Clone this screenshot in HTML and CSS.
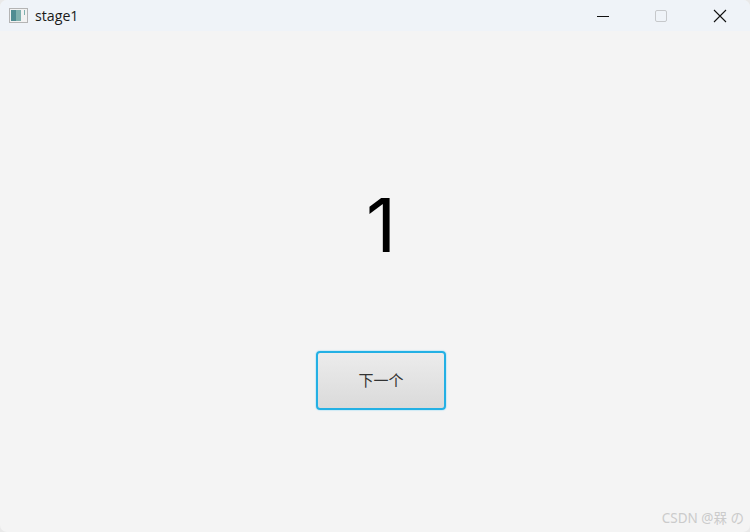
FILE: index.html
```html
<!DOCTYPE html>
<html lang="en">
<head>
    <meta charset="UTF-8">
    <meta name="viewport" content="width=device-width, initial-scale=1.0">
    <title>stage1</title>
    <link rel="stylesheet" href="styles.css">
</head>
<body>
    <div class="window">
        <div class="title-bar">
            <svg class="app-icon" width="19" height="15" viewBox="0 0 19 15">
                <rect x="0.5" y="0.5" width="18" height="14" fill="#f2f2f2" stroke="#b4b4b4"/>
                <rect x="2" y="2" width="10" height="11" fill="#7fb0ae"/>
                <rect x="2" y="2" width="5" height="11" fill="#4f8c92"/>
                <rect x="15" y="2" width="1" height="5" fill="#7fb0ae"/>
            </svg>
            <span class="title-text">stage1</span>
            <div class="window-controls">
                <button class="control">
                    <svg width="14" height="14" viewBox="0 0 14 14"><path d="M1 7.5H13" stroke="#111" stroke-width="1"/></svg>
                </button>
                <button class="control">
                    <svg width="14" height="14" viewBox="0 0 14 14"><rect x="1.5" y="1.5" width="11" height="11" rx="1.5" fill="none" stroke="#c6c8cb" stroke-width="1"/></svg>
                </button>
                <button class="control control-close">
                    <svg width="14" height="14" viewBox="0 0 14 14"><path d="M1 1L13 13M13 1L1 13" stroke="#111" stroke-width="1.1"/></svg>
                </button>
            </div>
        </div>
        <div class="content">
            <div class="counter">1</div>
            <button class="next-btn">下一个</button>
        </div>
        <div class="watermark">CSDN @槑 の</div>
    </div>
</body>
</html>
```

FILE: styles.css
```css
html, body {
    margin: 0;
    height: 100%;
    background-color: #e9e9e9;
}
.window {
    position: relative;
    height: 532px;
    display: flex;
    flex-direction: column;
    background-color: #f4f4f4;
    border-radius: 7px;
    overflow: hidden;
}
.title-bar {
    height: 31px;
    display: flex;
    align-items: center;
    padding-left: 9px;
    background-color: #eff3f8;
}
.app-icon {
    margin-right: 7px;
}
.title-text {
    font-family: "Open Sans", sans-serif;
    font-size: 14.2px;
    color: #1a1a1a;
}
.window-controls {
    margin-left: auto;
    display: flex;
    padding-right: 1px;
}
.control {
    width: 58px;
    height: 31px;
    padding: 0;
    border: none;
    background: none;
    display: flex;
    align-items: center;
    justify-content: center;
}
.control-close {
    width: 59px;
}
.content {
    flex: 1;
    display: flex;
    flex-direction: column;
    align-items: center;
    padding-left: 12px;
}
.counter {
    margin-top: 146px;
    font-family: Inter, sans-serif;
    font-size: 74px;
    line-height: 96px;
    color: #000;
}
.next-btn {
    margin-top: 78px;
    width: 130px;
    height: 59px;
    padding: 0 0 2px;
    font-family: "Noto Sans CJK SC", sans-serif;
    font-size: 15px;
    color: #333;
    background: linear-gradient(#ececec, #dadada);
    border: 2px solid #23b0e4;
    border-radius: 4px;
    box-shadow: 0 0 1px 1px #cfeaf6;
}
.watermark {
    position: absolute;
    right: 6px;
    bottom: 5px;
    font-family: "Noto Sans", "Noto Sans CJK SC", sans-serif;
    font-size: 13.5px;
    color: #cbcbcb;
}
```
